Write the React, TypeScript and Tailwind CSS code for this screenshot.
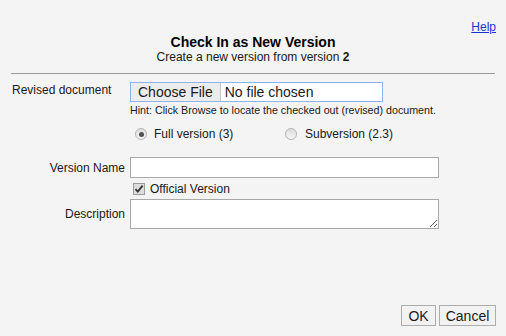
import React from 'react';

const Radio = ({ checked }: { checked?: boolean }) => (
  <span className="flex h-[12px] w-[12px] items-center justify-center rounded-full border border-[#b4b4b4] bg-gradient-to-b from-[#dcdcdc] to-[#f6f6f6]">
    {checked && <span className="h-[5px] w-[5px] rounded-full bg-[#505050]" />}
  </span>
);

const Checkbox = () => (
  <span className="flex h-[12px] w-[12px] items-center justify-center border border-[#9a9a9a] bg-[#dedede]">
    <svg width="10" height="10" viewBox="0 0 10 10">
      <path d="M1.5 5.2 L3.8 7.6 L8.6 1.6" fill="none" stroke="#333" strokeWidth="1.8" />
    </svg>
  </span>
);

const App = () => {
  return (
    <div className="flex h-[336px] w-[506px] flex-col bg-[#f4f4f4] font-['Liberation_Sans',Arial,sans-serif] text-[12px] text-[#1a1a1a]">
      <div className="flex justify-end pr-[10px] pt-[20px] leading-[14px]">
        <a href="#" className="text-[#1a33d6] underline">Help</a>
      </div>

      <div className="text-center">
        <h1 className="text-[14px] font-bold leading-[16px] text-black">Check In as New Version</h1>
        <p className="leading-[14px]">
          Create a new version from version <b>2</b>
        </p>
      </div>

      <div className="mx-[11px] mt-[9px] border-t border-[#9c9c9c]" />

      <div className="mt-[8px] flex">
        <div className="w-[130px] pl-[12px] pt-[1px] leading-[14px]">Revised document</div>
        <div className="flex flex-col">
          <div className="flex h-[20px] w-[253px] items-stretch border border-[#8fb3e8] bg-white text-[14px] leading-[16px]">
            <span className="flex items-center border-r border-[#c8c8c8] bg-[#ececec] px-[7px]">Choose File</span>
            <span className="flex items-center pl-[4px]">No file chosen</span>
          </div>
          <div className="mt-[2px] text-[10.7px] leading-[12px]">
            Hint: Click Browse to locate the checked out (revised) document.
          </div>
        </div>
      </div>

      <div className="mt-[11px] flex h-[14px] items-center pl-[135px]">
        <Radio checked />
        <span className="ml-[7px] w-[131px]">Full version (3)</span>
        <Radio />
        <span className="ml-[8px]">Subversion (2.3)</span>
      </div>

      <div className="mt-[16px] flex items-center">
        <label className="w-[125px] text-right">Version Name</label>
        <input className="ml-[5px] h-[21px] w-[309px] rounded-none border border-[#a9a9a9] bg-white outline-none" />
      </div>

      <div className="mt-[4px] flex h-[14px] items-center pl-[133px]">
        <Checkbox />
        <span className="ml-[5px]">Official Version</span>
      </div>

      <div className="mt-[3px] flex items-center">
        <label className="w-[125px] text-right">Description</label>
        <textarea className="ml-[5px] h-[30px] w-[309px] rounded-none border border-[#a9a9a9] bg-white outline-none" />
      </div>

      <div className="mt-auto flex justify-end gap-[3px] pb-[10px] pr-[10px]">
        <button className="h-[21px] w-[35px] border border-[#adadad] bg-[#f2f2f2] text-[14px] leading-[16px]">OK</button>
        <button className="h-[21px] w-[57px] border border-[#adadad] bg-[#f2f2f2] text-[14px] leading-[16px]">Cancel</button>
      </div>
    </div>
  );
};

export default App;
